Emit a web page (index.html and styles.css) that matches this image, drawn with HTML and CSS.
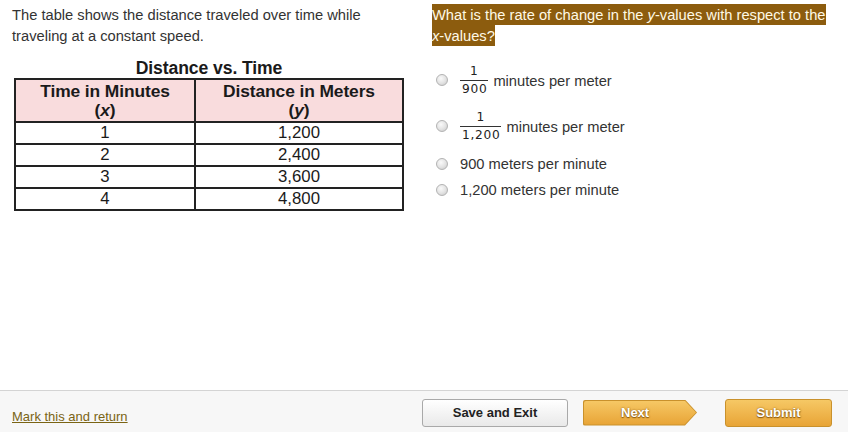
FILE: index.html
```html
<!DOCTYPE html>
<html>
<head>
<meta charset="utf-8">
<link rel="stylesheet" href="styles.css">
</head>
<body>
<div class="page">
  <main class="main">
    <section class="left">
      <p class="intro">The table shows the distance traveled over time while traveling at a constant speed.</p>
      <div class="caption">Distance vs. Time</div>
      <table class="data">
        <thead>
          <tr>
            <th class="c1">Time in Minutes<br>(<i>x</i>)</th>
            <th class="c2">Distance in Meters<br>(<i>y</i>)</th>
          </tr>
        </thead>
        <tbody>
          <tr><td>1</td><td>1,200</td></tr>
          <tr><td>2</td><td>2,400</td></tr>
          <tr><td>3</td><td>3,600</td></tr>
          <tr><td>4</td><td>4,800</td></tr>
        </tbody>
      </table>
    </section>
    <section class="right">
      <p class="question"><span class="hl">What is the rate of change in the <i>y</i>-values with respect to the <span class="nw"><i>x</i>-values?</span></span></p>
      <div class="options">
        <div class="opt tall">
          <span class="radio"></span>
          <span class="frac"><span class="num">1</span><span class="den">900</span></span>
          <span class="label">minutes per meter</span>
        </div>
        <div class="opt tall">
          <span class="radio"></span>
          <span class="frac"><span class="num">1</span><span class="den">1,200</span></span>
          <span class="label">minutes per meter</span>
        </div>
        <div class="plain">
          <div class="opt short">
            <span class="radio"></span>
            <span class="label">900 meters per minute</span>
          </div>
          <div class="opt short">
            <span class="radio"></span>
            <span class="label">1,200 meters per minute</span>
          </div>
        </div>
      </div>
    </section>
  </main>
  <footer class="footer">
    <a class="mark" href="#">Mark this and return</a>
    <button class="btn save">Save and Exit</button>
    <div class="next"><div class="next-inner">Next</div></div>
    <button class="btn submit">Submit</button>
  </footer>
</div>
</body>
</html>
```
FILE: styles.css
```css
* { box-sizing: border-box; }
html, body { margin: 0; padding: 0; background: #fff; }
body {
  font-family: "Liberation Sans", Arial, sans-serif;
  color: #333;
  width: 848px;
  height: 432px;
  overflow: hidden;
}
.page { display: flex; flex-direction: column; height: 432px; }
.main { display: flex; height: 390px; }
.left { width: 432px; padding: 5px 0 0 12px; }
.intro { margin: 0; font-size: 14.7px; line-height: 21px; width: 385px; }
.caption {
  width: 390px;
  margin: 12px 0 0 2px;
  text-align: center;
  font-weight: bold;
  font-size: 17.6px;
  line-height: 19px;
  color: #1a1a1a;
  letter-spacing: -0.1px;
}
.data {
  margin: 0 0 0 2px;
  width: 390px;
  border-collapse: collapse;
  color: #1a1a1a;
}
.data th, .data td {
  border: 2px solid #222;
  text-align: center;
  padding: 0;
}
.data th {
  background: #f9dcdd;
  font-size: 17.4px;
  font-weight: bold;
  line-height: 19px;
  padding: 2px 0 1px;
  letter-spacing: -0.1px;
}
.data .c1 { width: 180px; }
.data td { font-size: 16.8px; line-height: 20px; }

.right { width: 416px; padding-top: 5px; }
.question { margin: 0; font-size: 14.7px; line-height: 21px; width: 405px; }
.hl {
  background: #8c5c0e;
  color: #fff9e6;
  padding: 3px 0 2px;
}
.nw { white-space: nowrap; }
.options { margin-top: 10px; display: flex; flex-direction: column; }
.opt { display: flex; align-items: center; font-size: 14.7px; }
.opt.tall { height: 46px; }
.plain { padding-top: 2px; }
.opt.short { height: 26px; }
.radio {
  width: 12px;
  height: 12px;
  border-radius: 50%;
  margin: 0 12px 0 4px;
  border: 1px solid #b3b3b3;
  background: radial-gradient(circle at 40% 35%, #fafafa 0%, #e2e2e2 55%, #c4c4c4 100%);
  flex: none;
}
.frac {
  display: inline-flex;
  flex-direction: column;
  align-items: stretch;
  text-align: center;
  font-family: "DejaVu Sans", Verdana, sans-serif;
  font-size: 12.2px;
  letter-spacing: 0.7px;
  color: #222;
  margin-right: 5px;
}
.num { line-height: 13px; padding-bottom: 2px; border-bottom: 1px solid #333; }
.den { line-height: 13px; padding: 2px 1px 0 2px; }
.label { position: relative; top: 1px; }
.short .label { top: 0; }

.footer {
  height: 42px;
  border-top: 1px solid #d4d4d4;
  background: #f7f7f7;
  display: flex;
  align-items: center;
  padding: 2px 16px 0 12px;
}
.mark {
  flex: 1;
  font-size: 13px;
  color: #7a6414;
  text-decoration: underline;
  padding-top: 7px;
}
.btn {
  font-family: "Liberation Sans", Arial, sans-serif;
  font-weight: bold;
  font-size: 13px;
  height: 28px;
  border-radius: 3px;
  cursor: pointer;
}
.save {
  width: 146px;
  color: #222;
  border: 1px solid #a9a9a9;
  background: linear-gradient(#ffffff, #e9e9e9);
}
.next {
  width: 114px;
  height: 26px;
  margin-left: 15px;
  background: #c9912c;
  clip-path: polygon(0 0, 102px 0, 114px 13px, 102px 26px, 0 26px);
  padding: 1px;
  border-radius: 2px;
}
.next-inner {
  height: 24px;
  width: 112px;
  background: linear-gradient(#f6c865, #e8a436);
  clip-path: polygon(0 0, 100.6px 0, 112px 12px, 100.6px 24px, 0 24px);
  color: #fff;
  font-weight: bold;
  font-size: 13px;
  line-height: 24px;
  padding-left: 37px;
  text-shadow: 0 0 2px #8a5a10, 0 1px 1px #8a5a10;
  border-radius: 2px 0 0 2px;
}
.submit {
  width: 107px;
  margin-left: 28px;
  color: #fff;
  border: 1px solid #c9912c;
  background: linear-gradient(#f6c865, #e8a436);
  text-shadow: 0 0 2px #8a5a10, 0 1px 1px #8a5a10;
}
```
